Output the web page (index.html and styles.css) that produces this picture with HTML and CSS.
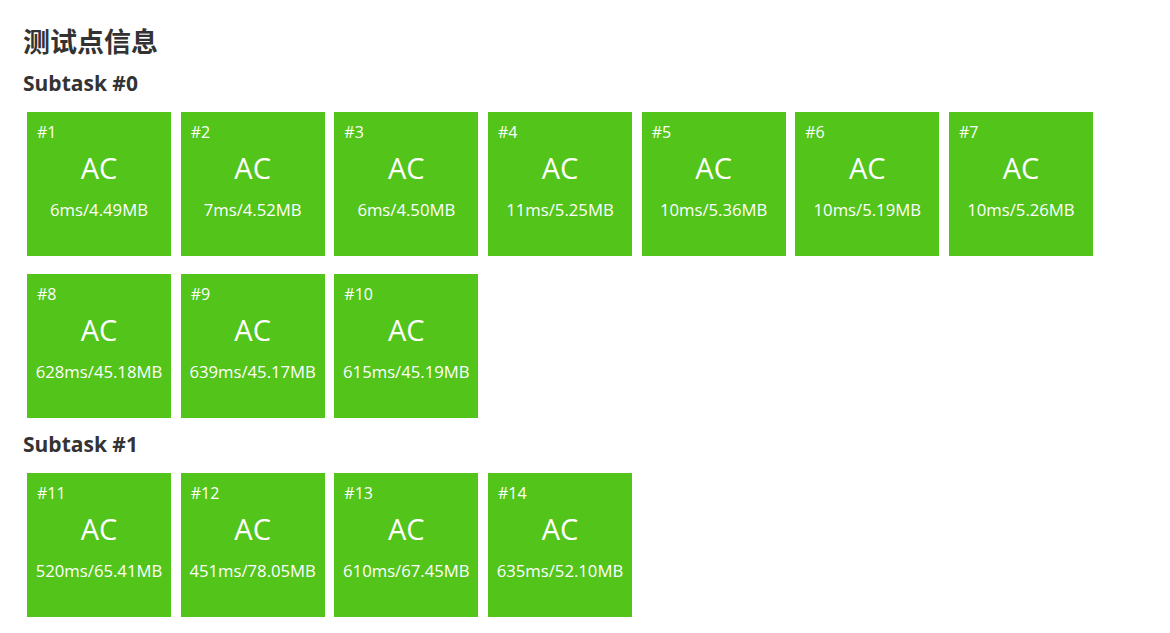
FILE: index.html
```html
<!DOCTYPE html>
<html lang="zh-CN">
<head>
<meta charset="utf-8">
<title>测试点信息</title>
<link rel="stylesheet" href="styles.css">
</head>
<body>
<div class="page">
  <h2 class="title">测试点信息</h2>
  <h3 class="subtask">Subtask #0</h3>
  <div class="cases">
    <div class="case"><div class="id">#1</div><div class="st">AC</div><div class="info">6ms/4.49MB</div></div>
    <div class="case"><div class="id">#2</div><div class="st">AC</div><div class="info">7ms/4.52MB</div></div>
    <div class="case"><div class="id">#3</div><div class="st">AC</div><div class="info">6ms/4.50MB</div></div>
    <div class="case"><div class="id">#4</div><div class="st">AC</div><div class="info">11ms/5.25MB</div></div>
    <div class="case"><div class="id">#5</div><div class="st">AC</div><div class="info">10ms/5.36MB</div></div>
    <div class="case"><div class="id">#6</div><div class="st">AC</div><div class="info">10ms/5.19MB</div></div>
    <div class="case"><div class="id">#7</div><div class="st">AC</div><div class="info">10ms/5.26MB</div></div>
    <div class="case"><div class="id">#8</div><div class="st">AC</div><div class="info">628ms/45.18MB</div></div>
    <div class="case"><div class="id">#9</div><div class="st">AC</div><div class="info">639ms/45.17MB</div></div>
    <div class="case"><div class="id">#10</div><div class="st">AC</div><div class="info">615ms/45.19MB</div></div>
  </div>
  <h3 class="subtask second">Subtask #1</h3>
  <div class="cases">
    <div class="case"><div class="id">#11</div><div class="st">AC</div><div class="info">520ms/65.41MB</div></div>
    <div class="case"><div class="id">#12</div><div class="st">AC</div><div class="info">451ms/78.05MB</div></div>
    <div class="case"><div class="id">#13</div><div class="st">AC</div><div class="info">610ms/67.45MB</div></div>
    <div class="case"><div class="id">#14</div><div class="st">AC</div><div class="info">635ms/52.10MB</div></div>
  </div>
</div>
</body>
</html>
```
FILE: styles.css
```css
html, body {
  margin: 0;
  padding: 0;
  background: #ffffff;
}
body {
  font-family: "Open Sans", "Noto Sans CJK SC", sans-serif;
  color: #333333;
}
.page {
  padding: 24px 0 0 23px;
}
.title {
  margin: 0;
  font-family: "Open Sans", "Noto Sans CJK SC", sans-serif;
  font-size: 27px;
  font-weight: 700;
  line-height: 36px;
}
.subtask {
  margin: 11px 0 17px 0;
  font-size: 21px;
  font-weight: 700;
  line-height: 24px;
}
.subtask.second {
  margin-top: 14px;
}
.cases {
  display: flex;
  flex-wrap: wrap;
  gap: 18px 9.67px;
  padding-left: 4px;
  width: 1080px;
}
.case {
  width: 144px;
  height: 144px;
  background: #52c41a;
  color: #ffffff;
  box-sizing: border-box;
}
.id {
  margin: 10px 0 0 10px;
  font-size: 16px;
  line-height: 20px;
}
.st {
  margin-top: 6px;
  text-align: center;
  font-size: 29px;
  line-height: 40px;
}
.info {
  margin-top: 11px;
  text-align: center;
  font-size: 16.7px;
  line-height: 22px;
}
```
